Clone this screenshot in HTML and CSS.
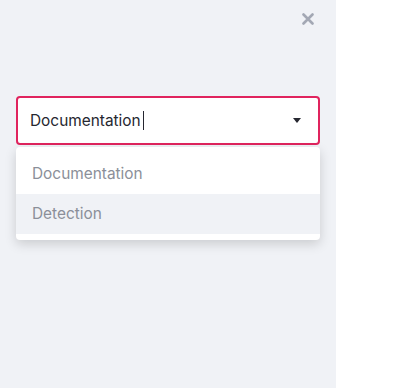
FILE: index.html
```html
<!DOCTYPE html>
<html lang="en">
<head>
  <meta charset="UTF-8" />
  <title>Sidebar select</title>
  <link rel="stylesheet" href="styles.css">
</head>
<body>
  <aside class="sidebar">
    <button class="close-btn" aria-label="Close">
      <svg width="12" height="12" viewBox="0 0 12 12"><path d="M1.5 1.5 L10.5 10.5 M10.5 1.5 L1.5 10.5" stroke="#a3a8b4" stroke-width="2.6" stroke-linecap="round"/></svg>
    </button>
    <div class="select-wrap">
      <div class="select-box">
        <span class="select-value">Documentation</span><span class="caret-line"></span>
        <svg class="arrow" width="8" height="5" viewBox="0 0 8 5"><path d="M0 0 L8 0 L4 5 Z" fill="#262730"/></svg>
      </div>
      <ul class="menu">
        <li class="option">Documentation</li>
        <li class="option hover">Detection</li>
      </ul>
    </div>
  </aside>
</body>
</html>
```

FILE: styles.css
```css
body {
  margin: 0;
  font-family: 'Inter', 'Noto Sans', sans-serif;
  background: #fff;
  height: 388px;
}

.sidebar {
  width: 336px;
  height: 388px;
  background: #f0f2f6;
  position: relative;
  box-sizing: border-box;
  padding: 96px 16px 0 16px;
}

.close-btn {
  position: absolute;
  top: 13px;
  right: 22px;
  background: none;
  border: none;
  padding: 0;
  width: 12px;
  height: 12px;
}
.close-btn svg { display: block; }

.select-wrap {
  position: relative;
}

.select-box {
  height: 49px;
  box-sizing: border-box;
  background: #fff;
  border: 2px solid #e0245e;
  border-radius: 4px;
  display: flex;
  align-items: center;
  padding: 0 17px 0 12px;
  font-size: 15.4px;
  color: #262730;
}
.caret-line {
  display: inline-block;
  width: 1px;
  height: 19px;
  background: #262730;
  margin-left: 2px;
}
.arrow {
  margin-left: auto;
}

.menu {
  list-style: none;
  margin: 2px 0 0 0;
  padding: 7px 0 6px 0;
  background: #fff;
  border-radius: 4px;
  box-shadow: 0 4px 12px rgba(0, 0, 0, 0.16);
}
.option {
  height: 40px;
  line-height: 40px;
  padding: 0 16px;
  font-size: 15.4px;
  color: #8b8f99;
}
.option.hover {
  background: #f0f2f6;
}
```
